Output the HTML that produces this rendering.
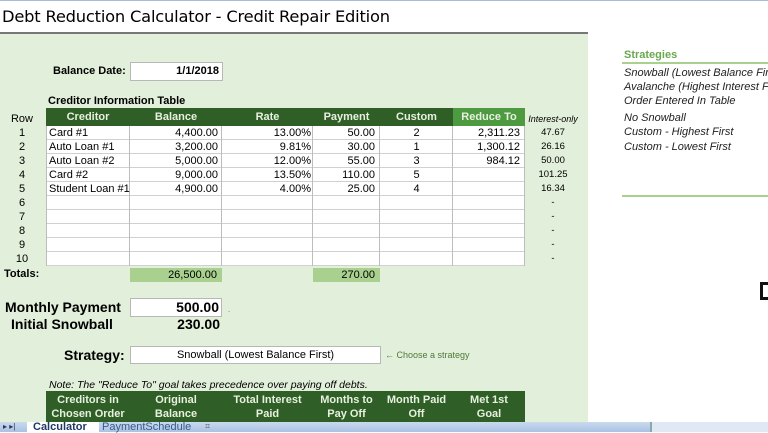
<!DOCTYPE html>
<html><head><meta charset="utf-8"><style>
*{margin:0;padding:0;box-sizing:border-box}
body{width:768px;height:432px;overflow:hidden;background:#fff;font-family:"Liberation Sans",sans-serif;position:relative;font-size:11px;color:#000}
.a{position:absolute;white-space:nowrap}
#title{left:2px;top:7px;font-size:16.3px;font-family:"DejaVu Sans",sans-serif;letter-spacing:-0.2px}
#line{left:0;top:32px;width:588px;height:2px;background:#777}
#green{left:0;top:34px;width:588px;height:390px;background:#e2efda}
.box{position:absolute;background:#fff;border:1px solid #b7b7b7;white-space:nowrap}
.hdr{position:absolute;background:#2f5f27;color:#e8f0e0;font-weight:bold;text-align:center;font-size:11px;white-space:nowrap}
.rl{position:absolute;width:40px;text-align:center;font-size:11px;line-height:14px}
.io{position:absolute;left:528px;width:50px;text-align:center;font-size:9.5px;line-height:14px;white-space:nowrap}
.tot{position:absolute;background:#a9d08e;height:14px;top:268px;font-size:11px;line-height:14px;text-align:right;padding-right:5px}
.st{position:absolute;left:624px;font-style:italic;font-size:11px;color:#222;white-space:nowrap}
.g{position:absolute;left:47px;width:478px;height:140px;top:126px;background:repeating-linear-gradient(to bottom,#fff 0,#fff 13px,#d0d0d0 13px,#d0d0d0 14px)}
.v{position:absolute;top:126px;height:140px;width:1px;background:#bdbdbd}
.col{position:absolute;top:126px;font-size:11px;line-height:14px;white-space:nowrap}
</style></head><body>
<div class="a" id="title">Debt Reduction Calculator - Credit Repair Edition</div>
<div class="a" id="line"></div>
<div class="a" id="green"></div>

<div class="a" style="left:53px;top:65px;font-weight:bold;font-size:11px">Balance Date:</div>
<div class="box" style="left:130px;top:62px;width:93px;height:19px;text-align:right;padding-right:3px;font-weight:bold;font-size:11px;line-height:17px">1/1/2018</div>

<div class="a" style="left:48px;top:95px;font-weight:bold;font-size:11px">Creditor Information Table</div>
<div class="rl" style="left:2px;top:112px">Row</div>

<div class="hdr" style="left:46px;top:108px;width:407px;height:18px"></div>
<div class="hdr" style="left:453px;top:108px;width:72px;height:18px;line-height:18px;background:#4e9a40">Reduce To</div>
<div class="hdr" style="left:46px;top:108px;width:84px;line-height:18px;background:none">Creditor</div>
<div class="hdr" style="left:130px;top:108px;width:92px;line-height:18px;background:none">Balance</div>
<div class="hdr" style="left:222px;top:108px;width:91px;line-height:18px;background:none">Rate</div>
<div class="hdr" style="left:313px;top:108px;width:67px;line-height:18px;background:none">Payment</div>
<div class="hdr" style="left:380px;top:108px;width:73px;line-height:18px;background:none">Custom</div>
<div class="io" style="top:112px;font-style:italic;font-size:9px">Interest-only</div>

<div class="g"></div>
<div class="v" style="left:46px"></div><div class="v" style="left:129px"></div><div class="v" style="left:221px"></div><div class="v" style="left:312px"></div><div class="v" style="left:379px"></div><div class="v" style="left:452px"></div><div class="v" style="left:524px"></div>

<div class="rl" style="left:2px;top:126px">1</div><div class="rl" style="left:2px;top:140px">2</div><div class="rl" style="left:2px;top:154px">3</div><div class="rl" style="left:2px;top:168px">4</div><div class="rl" style="left:2px;top:182px">5</div><div class="rl" style="left:2px;top:196px">6</div><div class="rl" style="left:2px;top:210px">7</div><div class="rl" style="left:2px;top:224px">8</div><div class="rl" style="left:2px;top:238px">9</div><div class="rl" style="left:2px;top:252px">10</div>

<div class="col" style="left:49px">Card #1<br>Auto Loan #1<br>Auto Loan #2<br>Card #2<br>Student Loan #1</div>
<div class="col" style="left:130px;width:88px;text-align:right">4,400.00<br>3,200.00<br>5,000.00<br>9,000.00<br>4,900.00</div>
<div class="col" style="left:222px;width:89px;text-align:right">13.00%<br>9.81%<br>12.00%<br>13.50%<br>4.00%</div>
<div class="col" style="left:313px;width:62px;text-align:right">50.00<br>30.00<br>55.00<br>110.00<br>25.00</div>
<div class="col" style="left:380px;width:73px;text-align:center">2<br>1<br>3<br>5<br>4</div>
<div class="col" style="left:453px;width:67px;text-align:right">2,311.23<br>1,300.12<br>984.12</div>
<div class="io" style="top:126px">47.67<br>26.16<br>50.00<br>101.25<br>16.34<br>-<br>-<br>-<br>-<br>-</div>

<div class="a" style="left:4px;top:268px;font-weight:bold;font-size:11px">Totals:</div>
<div class="tot" style="left:130px;width:92px">26,500.00</div>
<div class="tot" style="left:313px;width:67px">270.00</div>

<div class="a" style="left:5px;top:299px;font-weight:bold;font-size:14px">Monthly Payment</div>
<div class="box" style="left:130px;top:298px;width:92px;height:19px;text-align:right;padding-right:2px;font-weight:bold;font-size:14px;line-height:17px">500.00</div>
<div class="a" style="left:228px;top:305px;color:#c55a11;font-size:8px">.</div>
<div class="a" style="left:11px;top:316px;font-weight:bold;font-size:14px">Initial Snowball</div>
<div class="a" style="left:130px;width:90px;top:316px;text-align:right;font-weight:bold;font-size:14px">230.00</div>

<div class="a" style="left:64px;top:347px;font-weight:bold;font-size:14px">Strategy:</div>
<div class="box" style="left:130px;top:346px;width:251px;height:18px;text-align:center;font-size:11px;line-height:16px">Snowball (Lowest Balance First)</div>
<div class="a" style="left:385px;top:350px;color:#4e7a3a;font-size:9px">← Choose a strategy</div>

<div class="a" style="left:49px;top:379px;font-style:italic;font-size:10.5px">Note: The "Reduce To" goal takes precedence over paying off debts.</div>
<div class="hdr" style="left:46px;top:391px;width:479px;height:31px"></div>
<div class="hdr" style="left:46px;top:393px;width:84px;line-height:14px;background:none">Creditors in<br>Chosen Order</div>
<div class="hdr" style="left:130px;top:393px;width:92px;line-height:14px;background:none">Original<br>Balance</div>
<div class="hdr" style="left:222px;top:393px;width:91px;line-height:14px;background:none">Total Interest<br>Paid</div>
<div class="hdr" style="left:313px;top:393px;width:67px;line-height:14px;background:none">Months to<br>Pay Off</div>
<div class="hdr" style="left:380px;top:393px;width:73px;line-height:14px;background:none">Month Paid<br>Off</div>
<div class="hdr" style="left:453px;top:393px;width:72px;line-height:14px;background:none">Met 1st<br>Goal</div>

<div class="a" style="left:624px;top:49px;color:#6aa84f;font-weight:bold;font-size:11px">Strategies</div>
<div class="a" style="left:622px;top:62px;width:146px;height:2px;background:#a9d08e"></div>
<div class="st" style="top:67px">Snowball (Lowest Balance First)</div>
<div class="st" style="top:81px">Avalanche (Highest Interest First)</div>
<div class="st" style="top:95px">Order Entered In Table</div>
<div class="st" style="top:112px">No Snowball</div>
<div class="st" style="top:126px">Custom - Highest First</div>
<div class="st" style="top:141px">Custom - Lowest First</div>
<div class="a" style="left:622px;top:195px;width:146px;height:2px;background:#a9d08e"></div>

<div class="a" style="left:760px;top:282px;width:12px;height:18px;border:3px solid #111"></div>
<div class="a" style="left:0;top:0;width:768px;height:1px;background:#a8bed8"></div>

<div class="a" style="left:0;top:422px;width:768px;height:10px;background:linear-gradient(#c9d9ee,#a9c3e4)"></div>
<div class="a" style="left:3px;top:422px;font-size:8px;color:#335">▸ ▸|</div>
<div class="a" style="left:27px;top:422px;width:72px;height:10px;background:#fff"></div>
<div class="a" style="left:33px;top:421px;font-weight:bold;font-size:11px;color:#1f3864">Calculator</div>
<div class="a" style="left:102px;top:421px;font-size:11px;color:#3a5a8a">PaymentSchedule</div>
<div class="a" style="left:205px;top:421px;font-size:9px;color:#666">⌗</div>
<div class="a" style="left:650px;top:422px;width:118px;height:10px;background:#dfe8f4;border-left:2px solid #8aa"></div>
</body></html>
